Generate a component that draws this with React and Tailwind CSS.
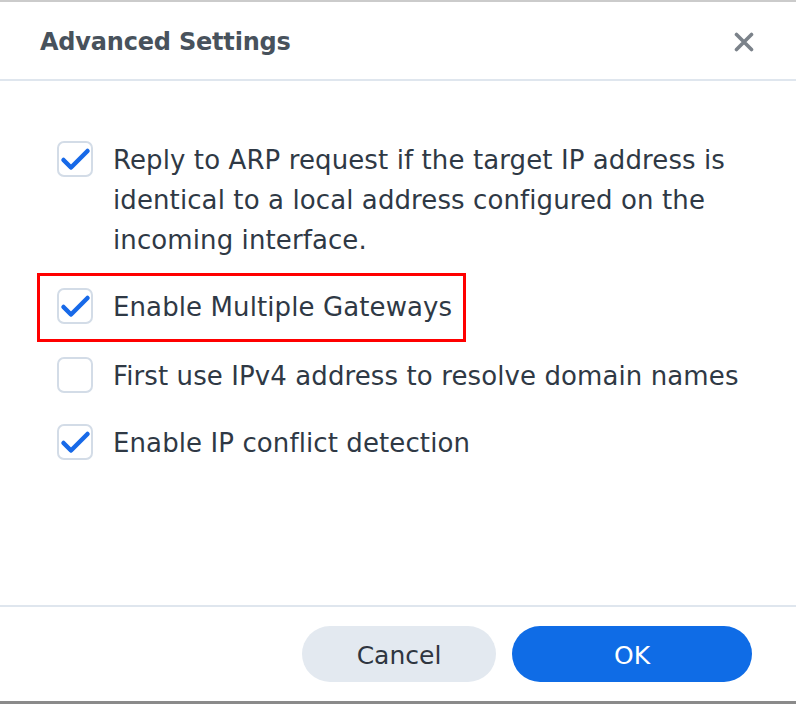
import React from "react";

const font = { fontFamily: '"DejaVu Sans", Verdana, sans-serif' };

function Check({ checked }) {
  return (
    <div className="w-[36px] h-[36px] shrink-0 rounded-[7px] border-2 border-[#d3dce7] bg-white mt-[1px] flex items-center justify-center">
      {checked && (
        <svg width="36" height="36" viewBox="0 0 36 36" className="-m-[2px]">
          <path d="M6.5 19 L14 26.5 L30.5 10" fill="none" stroke="#1769e8" strokeWidth="4.5" strokeLinecap="round" strokeLinejoin="round" />
        </svg>
      )}
    </div>
  );
}

function Row({ checked, children, className = "" }) {
  return (
    <div className={"flex items-start gap-[20px] " + className}>
      <Check checked={checked} />
      <div className="text-[26px] leading-[40px] text-[#2f3945] tracking-[0.1px]">{children}</div>
    </div>
  );
}

export default function App() {
  return (
    <div style={font} className="w-[796px] h-[704px] bg-white flex flex-col border-t-2 border-[#cbcbcb] overflow-hidden">
      <div className="h-[79px] shrink-0 flex items-center justify-between pl-[40px] pr-[42px] border-b-2 border-[#dfe6ee]">
        <div className="text-[24px] font-bold text-[#48525c] mt-[3px] tracking-[-0.2px]">Advanced Settings</div>
        <svg width="20" height="20" viewBox="0 0 20 20" className="mt-[2px]">
          <path d="M2.5 2.5 L17.5 17.5 M17.5 2.5 L2.5 17.5" stroke="#7b828a" strokeWidth="3.6" strokeLinecap="round" />
        </svg>
      </div>
      <div className="flex-1 pt-[59px] pl-[57px] flex flex-col">
        <Row checked>
          Reply to ARP request if the target IP address is
          <br />
          identical to a local address configured on the
          <br />
          incoming interface.
        </Row>
        <div className="relative mt-[27px]">
          <Row checked>Enable Multiple Gateways</Row>
          <div className="absolute left-[-20px] top-[-14px] w-[429px] h-[69px] border-[3px] border-[#ff0000] pointer-events-none" />
        </div>
        <Row className="mt-[29px]">First use IPv4 address to resolve domain names</Row>
        <Row checked className="mt-[27px]">Enable IP conflict detection</Row>
      </div>
      <div className="h-[96px] shrink-0 border-t-2 border-[#dfe6ee] flex items-center justify-end gap-[16px] pr-[44px]">
        <button className="w-[194px] h-[56px] rounded-full bg-[#e3e9f0] text-[25px] text-[#2f3640] pt-[4px]">Cancel</button>
        <button className="w-[240px] h-[56px] rounded-full bg-[#0f6ce6] text-[25px] text-white pt-[4px]">OK</button>
      </div>
      <div className="h-[3px] shrink-0 bg-[#8a8a8a]" />
    </div>
  );
}
